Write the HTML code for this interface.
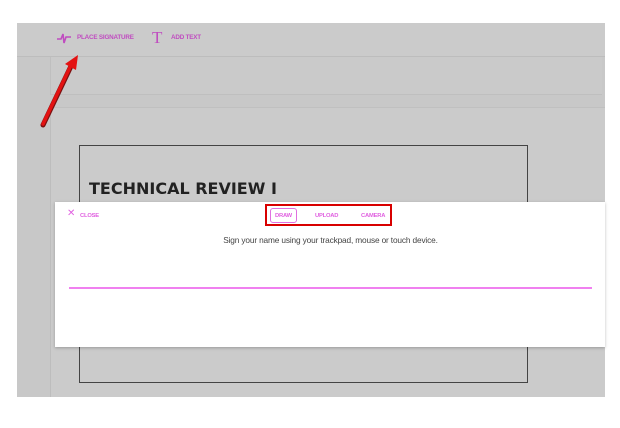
<!DOCTYPE html>
<html><head><style>
body{margin:0;width:620px;height:428px;background:#fff;position:relative;overflow:hidden;font-family:"Liberation Sans",sans-serif}
div{position:absolute;box-sizing:border-box}
.pk{color:#e060e0;font-size:6.5px;font-weight:bold;letter-spacing:-0.2px}
</style></head><body>
<div style="left:17px;top:23px;width:588px;height:374px;background:#c8c8c8"></div>
<div style="left:17px;top:23px;width:588px;height:34px;background:#cbcbcb;border-bottom:1px solid #bdbdbd"></div>
<div style="left:50px;top:57px;width:552px;height:38px;background:#cacaca;border-left:1px solid #bfbfbf;border-bottom:1px solid #bfbfbf"></div>
<div style="left:50px;top:107px;width:555px;height:290px;background:#cbcbcb;border-left:1px solid #bdbdbd;border-top:1px solid #c0c0c0"></div>
<svg style="position:absolute;left:56px;top:31px" width="16" height="14" viewBox="0 0 16 14"><path d="M1 8 L5 8 L7 3 L8 12 L10 6 L15 6" stroke="#c04cc0" stroke-width="1.6" fill="none"/></svg>
<div class="pk" style="left:77px;top:34px;font-size:6.3px;color:#c04cc0">PLACE SIGNATURE</div>
<div style="left:152px;top:28px;font-family:'Liberation Serif',serif;font-size:17px;color:#c04cc0">T</div>
<div class="pk" style="left:171px;top:34px;font-size:6.3px;color:#c04cc0">ADD TEXT</div>
<svg style="position:absolute;left:38px;top:52px" width="46" height="80" viewBox="0 0 46 80"><line x1="5" y1="73" x2="34" y2="12" stroke="#7a1010" stroke-width="5" stroke-linecap="round"/><line x1="5" y1="72" x2="34" y2="11" stroke="#e41212" stroke-width="3.5" stroke-linecap="round"/><polygon points="40,3 27,12 38,18" fill="#e41212"/></svg>
<div style="left:79px;top:145px;width:449px;height:238px;border:1.5px solid #444"></div>
<div style="left:89px;top:179px;font-family:'DejaVu Sans',sans-serif;font-size:16px;font-weight:bold;color:#222">TECHNICAL REVIEW I</div>
<div style="left:55px;top:202px;width:550px;height:145px;background:#fff;box-shadow:0 1px 3px rgba(0,0,0,.25)"></div>
<div class="pk" style="left:67px;top:208px;font-size:10px;font-weight:normal">✕</div>
<div class="pk" style="left:80px;top:213px;font-size:5.8px">CLOSE</div>
<div style="left:265px;top:204px;width:127px;height:22px;border:2px solid #d80000"></div>
<div style="left:270px;top:208px;width:27px;height:15px;border:1.5px solid #e070e0;border-radius:3px"></div>
<div class="pk" style="left:275px;top:213px;font-size:5.8px">DRAW</div>
<div class="pk" style="left:315px;top:213px;font-size:5.8px">UPLOAD</div>
<div class="pk" style="left:361px;top:213px;font-size:5.8px">CAMERA</div>
<div style="left:0;width:661px;top:235px;text-align:center;font-size:8.3px;color:#444;letter-spacing:-0.15px">Sign your name using your trackpad, mouse or touch device.</div>
<div style="left:69px;top:287px;width:523px;height:2px;background:#f080f0"></div>
</body></html>
